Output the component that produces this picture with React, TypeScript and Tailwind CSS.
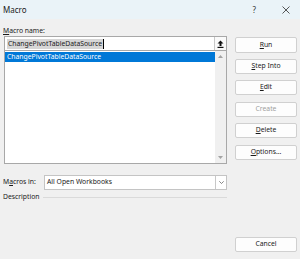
import React from "react";

const font = { fontFamily: '"Noto Sans", "Segoe UI", sans-serif' };

function Btn({ children, cls = "", disabled = false }: { children: React.ReactNode; cls?: string; disabled?: boolean }) {
  return (
    <div
      className={`w-[62px] h-[15px] flex items-center justify-center bg-[#fdfdfd] border border-[#d0d0d0] rounded-[2px] text-[6.8px] leading-none ${disabled ? "text-[#a0a0a0]" : "text-[#1a1a1a]"} ${cls}`}
    >
      {children}
    </div>
  );
}

export default function App() {
  return (
    <div className="w-[300px] h-[259px] bg-[#f0f0f0] overflow-hidden flex flex-col" style={font}>
      <div className="h-[19px] bg-[#eaf3f8] flex items-center pl-[3px] pr-[10px] shrink-0">
        <span className="text-[8px] text-[#1a1a1a] leading-none">Macro</span>
        <span className="ml-auto text-[8px] text-[#333] leading-none mr-[26px]">?</span>
        <svg width="8" height="8" viewBox="0 0 8 8">
          <path d="M0.5 0.5 L7.5 7.5 M7.5 0.5 L0.5 7.5" stroke="#444" strokeWidth="0.9" />
        </svg>
      </div>
      <div className="flex flex-1">
        <div className="w-[227px] pl-[4px] flex flex-col">
          <div className="pt-[6px] h-[17px] text-[6.8px] leading-[11px] text-[#1a1a1a] -ml-[1px]">
            <span className="underline">M</span>acro name:
          </div>
          <div className="h-[15px] bg-white border border-[#a8a8a8] flex items-center pl-[2px] relative">
            <span className="bg-[#d6d6d6] text-[6.8px] leading-[10px] text-[#1a1a1a] px-[1px]">ChangePivotTableDataSource</span>
            <span className="w-[1px] h-[10px] bg-black"></span>
            <div className="absolute right-0 top-0 w-[12px] h-[13px] border-l border-[#c8c8c8] bg-[#fafafa] flex items-center justify-center">
              <svg width="7" height="8" viewBox="0 0 7 8">
                <path d="M3.5 0.5 L6.5 3.5 L4.5 3.5 L4.5 6 L2.5 6 L2.5 3.5 L0.5 3.5 Z" fill="#111" />
                <rect x="0.5" y="6.8" width="6" height="1.2" fill="#111" />
              </svg>
            </div>
          </div>
          <div className="h-[113px] bg-white border border-[#a8a8a8] border-t-0 flex">
            <div className="flex-1 pt-[1px]">
              <div className="h-[10px] bg-[#0078d7] text-white text-[6.8px] leading-[10px] pl-[2px]">ChangePivotTableDataSource</div>
            </div>
            <div className="w-[11px] bg-[#f0f0f0] flex flex-col items-center justify-between py-[4px]">
              <svg width="5" height="3" viewBox="0 0 5 3"><path d="M0 3 L2.5 0 L5 3 Z" fill="#a3a3a3" /></svg>
              <svg width="5" height="3" viewBox="0 0 5 3"><path d="M0 0 L2.5 3 L5 0 Z" fill="#a3a3a3" /></svg>
            </div>
          </div>
          <div className="mt-[11px] flex items-center h-[15px]">
            <span className="w-[41px] text-[6.8px] leading-none text-[#1a1a1a] -ml-[1px]">M<span className="underline">a</span>cros in:</span>
            <div className="flex-1 h-[15px] bg-white border border-[#c4c4c4] flex items-center pl-[2px]">
              <span className="text-[6.8px] leading-none text-[#1a1a1a]">All Open Workbooks</span>
              <div className="ml-auto w-[11px] h-[13px] border-l border-[#c8c8c8] flex items-center justify-center">
                <svg width="5" height="3" viewBox="0 0 5 3"><path d="M0.3 0.3 L2.5 2.5 L4.7 0.3" stroke="#555" strokeWidth="0.7" fill="none" /></svg>
              </div>
            </div>
          </div>
          <div className="mt-[2px] flex items-center h-[11px] -ml-[1px]">
            <span className="text-[6.8px] leading-none text-[#1a1a1a]">Description</span>
            <div className="flex-1 h-[1px] bg-[#dadada] ml-[3px]"></div>
          </div>
        </div>
        <div className="ml-[8px] flex flex-col pt-[18px]">
          <Btn cls="h-[16px] border-[#0078d4]"><span><span className="underline">R</span>un</span></Btn>
          <Btn cls="mt-[6px]"><span><span className="underline">S</span>tep Into</span></Btn>
          <Btn cls="mt-[6px]"><span><span className="underline">E</span>dit</span></Btn>
          <Btn cls="mt-[7px]" disabled>Create</Btn>
          <Btn cls="mt-[6px]"><span><span className="underline">D</span>elete</span></Btn>
          <Btn cls="mt-[7px]"><span><span className="underline">O</span>ptions...</span></Btn>
          <Btn cls="mt-[77px]">Cancel</Btn>
        </div>
      </div>
    </div>
  );
}
